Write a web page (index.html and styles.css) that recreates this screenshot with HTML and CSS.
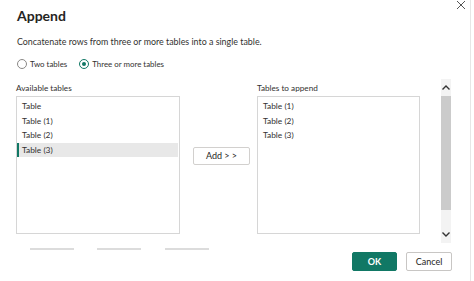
FILE: index.html
```html
<!DOCTYPE html>
<html>
<head>
<meta charset="utf-8">
<link rel="stylesheet" href="styles.css">
</head>
<body>
<div class="dialog">
  <div class="header">
    <h1 class="title">Append</h1>
    <svg class="close" width="10" height="10" viewBox="0 0 10 10"><path d="M1 1 L9 9 M9 1 L1 9" stroke="#555" stroke-width="1" fill="none"/></svg>
  </div>
  <p class="desc">Concatenate rows from three or more tables into a single table.</p>
  <div class="radios">
    <label class="radio"><span class="dot"></span>Two tables</label>
    <label class="radio"><span class="dot on"></span>Three or more tables</label>
  </div>
  <div class="main">
    <div class="col left">
      <div class="label">Available tables</div>
      <div class="list">
        <div class="item">Table</div>
        <div class="item">Table (1)</div>
        <div class="item">Table (2)</div>
        <div class="item sel">Table (3)</div>
      </div>
    </div>
    <div class="mid">
      <button class="btn add">Add &gt; &gt;</button>
    </div>
    <div class="col right">
      <div class="label">Tables to append</div>
      <div class="list">
        <div class="item">Table (1)</div>
        <div class="item">Table (2)</div>
        <div class="item">Table (3)</div>
      </div>
    </div>
    <div class="scrollbar">
      <svg class="arrow" width="10" height="8" viewBox="0 0 10 8"><path d="M1.5 5.5 L5 2 L8.5 5.5" stroke="#333" stroke-width="1.4" fill="none"/></svg>
      <div class="thumb"></div>
      <div class="track"></div>
      <svg class="arrow" width="10" height="8" viewBox="0 0 10 8"><path d="M1.5 2.5 L5 6 L8.5 2.5" stroke="#333" stroke-width="1.4" fill="none"/></svg>
    </div>
  </div>
  <div class="stubs">
    <span class="stub s1"></span>
    <span class="stub s2"></span>
    <span class="stub s3"></span>
  </div>
  <div class="footer">
    <button class="btn ok">OK</button>
    <button class="btn cancel">Cancel</button>
  </div>
</div>
</body>
</html>
```

FILE: styles.css
```css
* { box-sizing: border-box; }
html, body {
  margin: 0;
  padding: 0;
  background: #ffffff;
}
body {
  width: 474px;
  height: 281px;
  overflow: hidden;
  font-family: "Segoe UI", Lato, "Noto Sans", sans-serif;
  color: #252423;
}
.dialog {
  width: 471px;
  height: 281px;
  border-right: 1px solid #e6e6e6;
  position: relative;
  padding-left: 16px;
}
.header {
  display: flex;
  justify-content: space-between;
  align-items: flex-start;
  height: 30px;
}
.title {
  margin: 6px 0 0 1px;
  font-size: 14px;
  font-weight: 700;
  line-height: 20px;
  color: #252423;
}
.close {
  margin-top: 0px;
  margin-right: 4px;
}
.desc {
  margin: 5px 0 0 1px;
  font-size: 8.9px;
  line-height: 14px;
  color: #323130;
}
.radios {
  display: flex;
  gap: 12px;
  margin-top: 8px;
  margin-left: 1px;
  font-size: 7.9px;
  line-height: 14px;
  color: #323130;
}
.radio {
  display: flex;
  align-items: center;
  gap: 3px;
}
.dot {
  width: 10px;
  height: 10px;
  border: 1px solid #8a8886;
  border-radius: 50%;
  display: inline-block;
  position: relative;
}
.dot.on {
  border-color: #117865;
}
.dot.on::after {
  content: "";
  position: absolute;
  left: 2px;
  top: 2px;
  width: 4px;
  height: 4px;
  border-radius: 50%;
  background: #117865;
}
.main {
  display: flex;
  margin-top: 8px;
  height: 164px;
}
.col {
  display: flex;
  flex-direction: column;
  padding-top: 3px;
}
.left { width: 164px; }
.right { width: 163px; }
.label {
  font-size: 8.2px;
  line-height: 13px;
  color: #323130;
  height: 14px;
}
.list {
  height: 138px;
  border: 1px solid #d6d6d6;
  padding-top: 2px;
}
.item {
  height: 14.5px;
  line-height: 14.5px;
  font-size: 8.4px;
  padding-left: 5px;
  color: #323130;
}
.sel {
  background: #e8e8e8;
  border-left: 2px solid #117865;
  padding-left: 3px;
  margin-right: 1px;
}
.mid {
  width: 57px;
  margin-left: 13px;
  margin-right: 7px;
  padding-top: 64px;
}
.btn {
  font-family: inherit;
  cursor: default;
  border-radius: 2px;
}
.add {
  width: 57px;
  height: 18px;
  border: 1px solid #d2d0ce;
  background: #ffffff;
  font-size: 9px;
  color: #252423;
  padding: 0;
}
.scrollbar {
  width: 10px;
  margin-left: 21px;
  background: #f3f3f3;
  display: flex;
  flex-direction: column;
  align-items: center;
}
.arrow {
  margin-top: 5px;
  margin-bottom: 4px;
}
.thumb {
  width: 10px;
  height: 114px;
  background: #cbcbcb;
}
.track {
  flex: 1;
}
.scrollbar .arrow:last-child {
  margin-top: 0;
  margin-bottom: 5px;
}
.stubs {
  display: flex;
  margin-top: 5px;
  margin-left: 14px;
  height: 2px;
}
.stub {
  display: block;
  height: 1.5px;
  width: 44px;
  background: #dcdcdc;
}
.s2 { margin-left: 23px; }
.s3 { margin-left: 24px; }
.footer {
  display: flex;
  justify-content: flex-end;
  gap: 9px;
  margin-top: 2px;
  margin-right: 18px;
}
.ok {
  width: 45px;
  height: 19px;
  background: #117865;
  border: 1px solid #117865;
  color: #ffffff;
  font-weight: 700;
  font-size: 9px;
  padding: 0;
}
.cancel {
  width: 46px;
  height: 19px;
  background: #ffffff;
  border: 1px solid #c8c6c4;
  color: #252423;
  font-size: 9px;
  padding: 0;
}
```
